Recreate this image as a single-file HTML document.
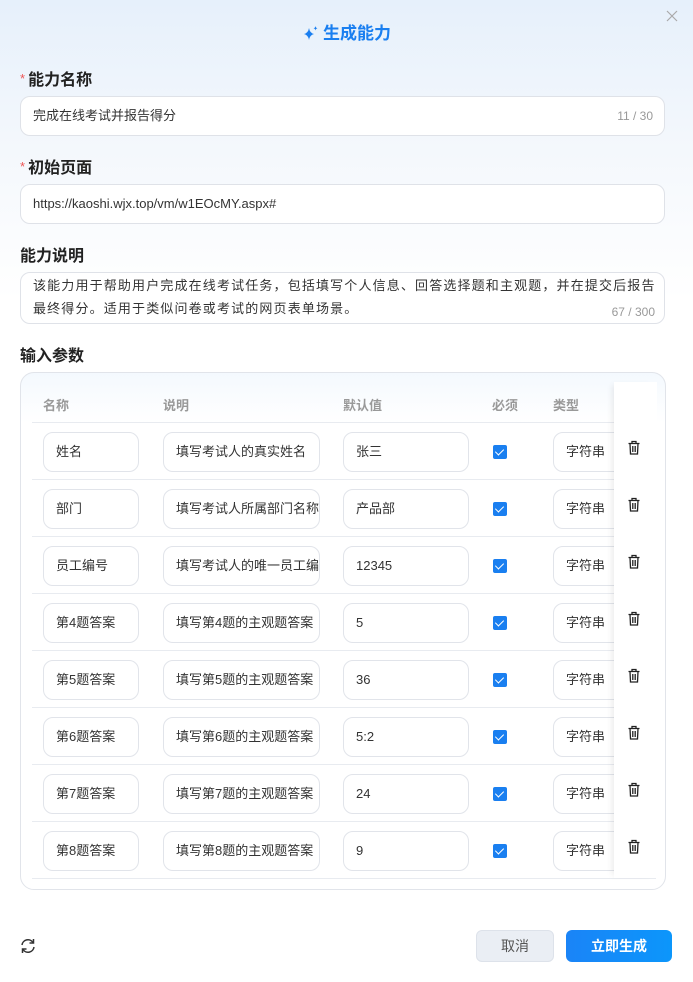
<!DOCTYPE html>
<html><head><meta charset="utf-8"><style>
*{box-sizing:border-box;margin:0;padding:0}
body{width:693px;height:982px;background:#fff;font-family:"Liberation Sans","Noto Sans CJK SC",sans-serif;color:#222;position:relative;overflow:hidden}
.bg{position:absolute;left:0;top:0;width:693px;height:300px;background:linear-gradient(180deg,#e6f0fb 0%,#f3f7fc 45%,#fff 100%)}
.abs{position:absolute}
.title{left:0;width:693px;top:19px;text-align:center;font-size:17px;font-weight:bold;color:#1a7ff0}
.lbl{left:20px;font-size:16px;font-weight:bold;color:#222}
.lbl i{color:#e55;font-style:normal;font-weight:normal;font-size:13px;margin-right:3px;position:relative;top:-2px}
.inp{left:20px;width:645px;background:#fff;border:1px solid #dfe2e8;border-radius:10px;font-size:13px;color:#333;padding-left:12px}
.cnt{position:absolute;right:11px;font-size:12px;color:#999;letter-spacing:0}
.tbl{left:20px;top:372px;width:646px;height:518px;border:1px solid #e1e4ea;border-radius:14px;background:linear-gradient(180deg,#f4f9fe 0,#fff 50px);overflow:hidden}
.th{position:absolute;top:22px;font-size:13px;font-weight:bold;color:#999}
.line{position:absolute;left:11px;width:624px;height:1px;background:#e8ebf0}
.cell{position:absolute;height:40px;border:1px solid #e1e4ea;border-radius:10px;background:#fff;font-size:13px;color:#333;line-height:38px;padding-left:12px;white-space:nowrap;overflow:hidden}
.chk{position:absolute;width:14px;height:14px;background:#1a7ff0;border-radius:2px}
.chk:after{content:"";position:absolute;left:4px;top:1.5px;width:4px;height:7px;border:solid #fff;border-width:0 1.5px 1.5px 0;transform:rotate(45deg)}
.del{position:absolute;left:593px;top:9px;width:43px;height:496px;background:#fff;box-shadow:-5px 0 6px -3px rgba(0,0,0,.08)}
</style></head><body>
<div class="bg"></div>
<svg class="abs" style="left:665px;top:9px" width="14" height="14" viewBox="0 0 14 14"><path d="M2 2L12 12M12 2L2 12" stroke="#aaa" stroke-width="1.2"/></svg>
<div class="abs title"><svg width="18" height="18" viewBox="0 0 18 18" style="vertical-align:-3px;margin-right:3px"><path d="M7 4Q7.8 9 12 10Q7.8 11 7 16Q6.2 11 2 10Q6.2 9 7 4Z" fill="#1a7ff0"/><path d="M13.5 2Q13.8 4 15.5 4.3Q13.8 4.6 13.5 6.5Q13.2 4.6 11.5 4.3Q13.2 4 13.5 2Z" fill="#1a7ff0"/></svg>生成能力</div>
<div class="abs lbl" style="top:66px"><i>*</i>能力名称</div>
<div class="abs inp" style="top:96px;height:40px;line-height:38px">完成在线考试并报告得分<span class="cnt">11 / 30</span></div>
<div class="abs lbl" style="top:154px"><i>*</i>初始页面</div>
<div class="abs inp" style="top:184px;height:40px;line-height:38px">https://kaoshi.wjx.top/vm/w1EOcMY.aspx#</div>
<div class="abs lbl" style="top:242px">能力说明</div>
<div class="abs inp" style="top:272px;height:52px;line-height:23px;padding-top:1px;padding-right:4px;letter-spacing:1.15px">该能力用于帮助用户完成在线考试任务，包括填写个人信息、回答选择题和主观题，并在提交后报告最终得分。适用于类似问卷或考试的网页表单场景。<span class="cnt" style="bottom:3px;right:9px;line-height:16px">67 / 300</span></div>
<div class="abs lbl" style="top:342px">输入参数</div>
<div class="abs tbl">
<div class="th" style="left:22px">名称</div><div class="th" style="left:142px">说明</div><div class="th" style="left:322px">默认值</div><div class="th" style="left:471px">必须</div><div class="th" style="left:532px">类型</div>
<div class="line" style="top:49px"></div>
<div id="rows"></div>
<div class="del"></div>
<div id="dels"></div>
</div>
<svg class="abs" style="left:19px;top:937px" width="18" height="18" viewBox="0 0 18 18" fill="none" stroke="#333" stroke-width="1.5"><path d="M3 8A6 6 0 0 1 14 5.5M15 10A6 6 0 0 1 4 12.5"/><path d="M14.5 2V6H10.5M3.5 16V12H7.5"/></svg>
<div class="abs" style="left:476px;top:930px;width:78px;height:32px;background:#eaeef4;border:1px solid #dde2ea;border-radius:6px;text-align:center;line-height:30px;font-size:14px;color:#555">取消</div>
<div class="abs" style="left:566px;top:930px;width:106px;height:32px;background:linear-gradient(90deg,#1a84f7,#0c96fb);border-radius:6px;text-align:center;line-height:32px;font-size:14px;color:#fff;font-weight:bold">立即生成</div>
<script>
var d=[["姓名","填写考试人的真实姓名","张三"],["部门","填写考试人所属部门名称","产品部"],["员工编号","填写考试人的唯一员工编号","12345"],["第4题答案","填写第4题的主观题答案","5"],["第5题答案","填写第5题的主观题答案","36"],["第6题答案","填写第6题的主观题答案","5:2"],["第7题答案","填写第7题的主观题答案","24"],["第8题答案","填写第8题的主观题答案","9"]];
var h="",g="";
d.forEach(function(r,i){var t=59+i*57;
h+='<div class="cell" style="left:22px;top:'+t+'px;width:96px">'+r[0]+'</div>'+
'<div class="cell" style="left:142px;top:'+t+'px;width:157px">'+r[1]+'</div>'+
'<div class="cell" style="left:322px;top:'+t+'px;width:126px">'+r[2]+'</div>'+
'<div class="chk" style="left:472px;top:'+(t+13)+'px"></div>'+
'<div class="cell" style="left:532px;top:'+t+'px;width:80px">字符串</div>'+
'<div class="line" style="top:'+(t+47)+'px"></div>';
g+='<svg style="position:absolute;left:606px;top:'+(t+8)+'px" width="14" height="16" viewBox="0 0 14 16" fill="none" stroke="#222" stroke-width="1.3"><path d="M1.5 3.5H12.5M5 3.5V1.5H9V3.5M3 3.5L3.5 14H10.5L11 3.5M5.8 6V12M8.2 6V12"/></svg>';});
document.getElementById("rows").innerHTML=h;document.getElementById("dels").innerHTML=g;
</script>
</body></html>
